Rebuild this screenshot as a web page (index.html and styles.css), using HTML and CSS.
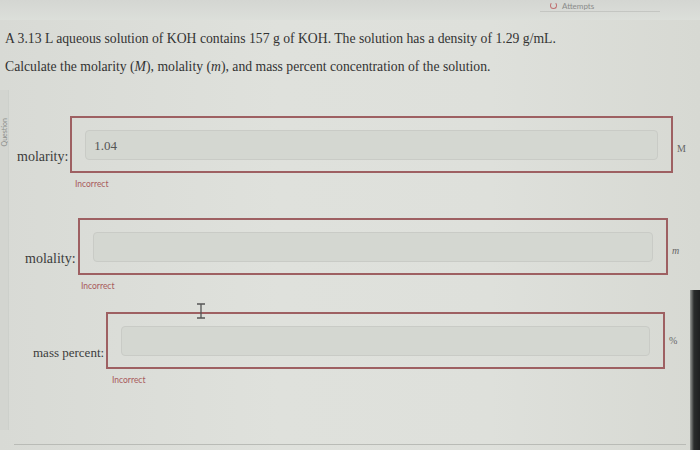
FILE: index.html
```html
<!DOCTYPE html>
<html>
<head>
<meta charset="utf-8">
<link rel="stylesheet" href="styles.css">
</head>
<body>
<div class="screen">
  <div class="topbar">
    <div class="attempts"><span class="att-icon"></span><span class="att-text">Attempts</span></div>
  </div>
  <div class="layout">
    <aside class="rail"><span class="rail-text">Question</span></aside>
    <main class="content">
      <p class="q q1">A 3.13 L aqueous solution of KOH contains 157 g of KOH. The solution has a density of 1.29 g/mL.</p>
      <p class="q q2">Calculate the molarity (<i>M</i>), molality (<i>m</i>), and mass percent concentration of the solution.</p>

      <div class="answer a1">
        <div class="row">
          <span class="label">molarity:</span>
          <div class="box"><div class="input">1.04</div></div>
          <span class="unit">M</span>
        </div>
        <div class="msg">Incorrect</div>
      </div>

      <div class="answer a2">
        <div class="row">
          <span class="label">molality:</span>
          <div class="box"><div class="input"></div></div>
          <span class="unit"><i>m</i></span>
        </div>
        <div class="msg">Incorrect</div>
      </div>

      <div class="answer a3">
        <div class="row">
          <span class="label">mass percent:</span>
          <div class="box"><div class="input"></div></div>
          <span class="unit">%</span>
        </div>
        <div class="msg">Incorrect</div>
      </div>
    </main>
  </div>
  <div class="footer-line"></div>
  <div class="bezel"></div>
  <svg class="cursor" width="12" height="16" viewBox="0 0 12 16"><path d="M2 1h8M6 1v14M2 15h8" stroke="#555" stroke-width="1.3" fill="none"/></svg>
</div>
</body>
</html>
```
FILE: styles.css
```css
html, body {
  margin: 0;
  padding: 0;
}
body {
  width: 700px;
  height: 450px;
  overflow: hidden;
  background: #dcdfd9;
  font-family: "Liberation Serif", "Times New Roman", serif;
  color: #333333;
}
.screen {
  position: relative;
  width: 700px;
  height: 450px;
  background: linear-gradient(90deg, #d8dad5 0%, #dfe1dc 40%, #dee0db 70%, #d7d9d3 100%);
}
.topbar {
  height: 20px;
  display: flex;
  justify-content: flex-end;
  padding-right: 40px;
  background: linear-gradient(180deg, #d4d6d2, #dcdfda);
}
.attempts {
  width: 110px;
  height: 11px;
  border-bottom: 1px solid #c4c6c2;
  display: flex;
  align-items: center;
  gap: 5px;
  padding-left: 10px;
}
.att-icon {
  width: 5px;
  height: 5px;
  border: 1.5px solid #c07070;
  border-top-color: transparent;
  border-radius: 50%;
}
.att-text {
  font-family: "Lato", "Liberation Sans", sans-serif;
  font-size: 8px;
  color: #8a8c8a;
  line-height: 10px;
}
.layout {
  display: flex;
  height: 410px;
}
.rail {
  width: 8px;
  flex: none;
  background: #d3d5d0;
  border-right: 1px solid #cdd0cb;
  margin-top: 70px;
  height: 340px;
}
.rail-text {
  display: block;
  writing-mode: vertical-rl;
  transform: rotate(180deg);
  font-family: "Lato", "Liberation Sans", sans-serif;
  font-size: 7px;
  line-height: 8px;
  color: #8d908d;
  margin-top: 28px;
}
.content {
  flex: 1;
  margin-left: -4px;
}
.q {
  margin: 0;
  font-size: 13.7px;
  white-space: nowrap;
}
.q1 {
  margin-top: 11px;
}
.q2 {
  margin-top: 12px;
}
.answer {
  display: flex;
  flex-direction: column;
}
.row {
  display: flex;
  align-items: center;
}
.label {
  font-size: 14px;
  color: #3c3c3c;
  margin-top: 24px;
  padding-right: 2px;
}
.box {
  flex: 1;
  height: 57px;
  border: 2px solid #9e6062;
  padding: 12px 13px 11px 13px;
  box-sizing: border-box;
}
.input {
  height: 30px;
  box-sizing: border-box;
  border: 1px solid #c9cbc6;
  border-radius: 4px;
  background: #d4d7d1;
  font-size: 13px;
  color: #555;
  padding: 7px 0 0 8px;
}
.unit {
  width: 14px;
  padding-left: 4px;
  padding-top: 8px;
  font-size: 10px;
  color: #666;
}
.msg {
  font-family: "Lato", "Liberation Sans", sans-serif;
  font-size: 8.5px;
  color: #a85a5c;
  margin-top: 6px;
}
.a1 {
  margin-top: 41px;
  padding-left: 12px;
  padding-right: 9px;
}
.a1 .msg { margin-left: 58px; }
.a2 {
  margin-top: 29px;
  padding-left: 20px;
  padding-right: 14px;
}
.a2 .msg { margin-left: 56px; }
.a3 {
  margin-top: 21px;
  padding-left: 28px;
  padding-right: 17px;
}
.a3 .label { font-size: 13px; }
.a3 .msg { margin-left: 79px; }
.a3 .unit { padding-top: 0; }
.footer-line {
  position: absolute;
  left: 14px;
  right: 14px;
  bottom: 5px;
  border-top: 1px solid #b9bbb6;
}
.bezel {
  position: absolute;
  right: 0;
  top: 290px;
  width: 10px;
  height: 160px;
  background: linear-gradient(90deg, #9a9c98, #2a2c2b 40%, #1e1f1f);
}
.cursor {
  position: absolute;
  left: 195px;
  top: 303px;
}
```
